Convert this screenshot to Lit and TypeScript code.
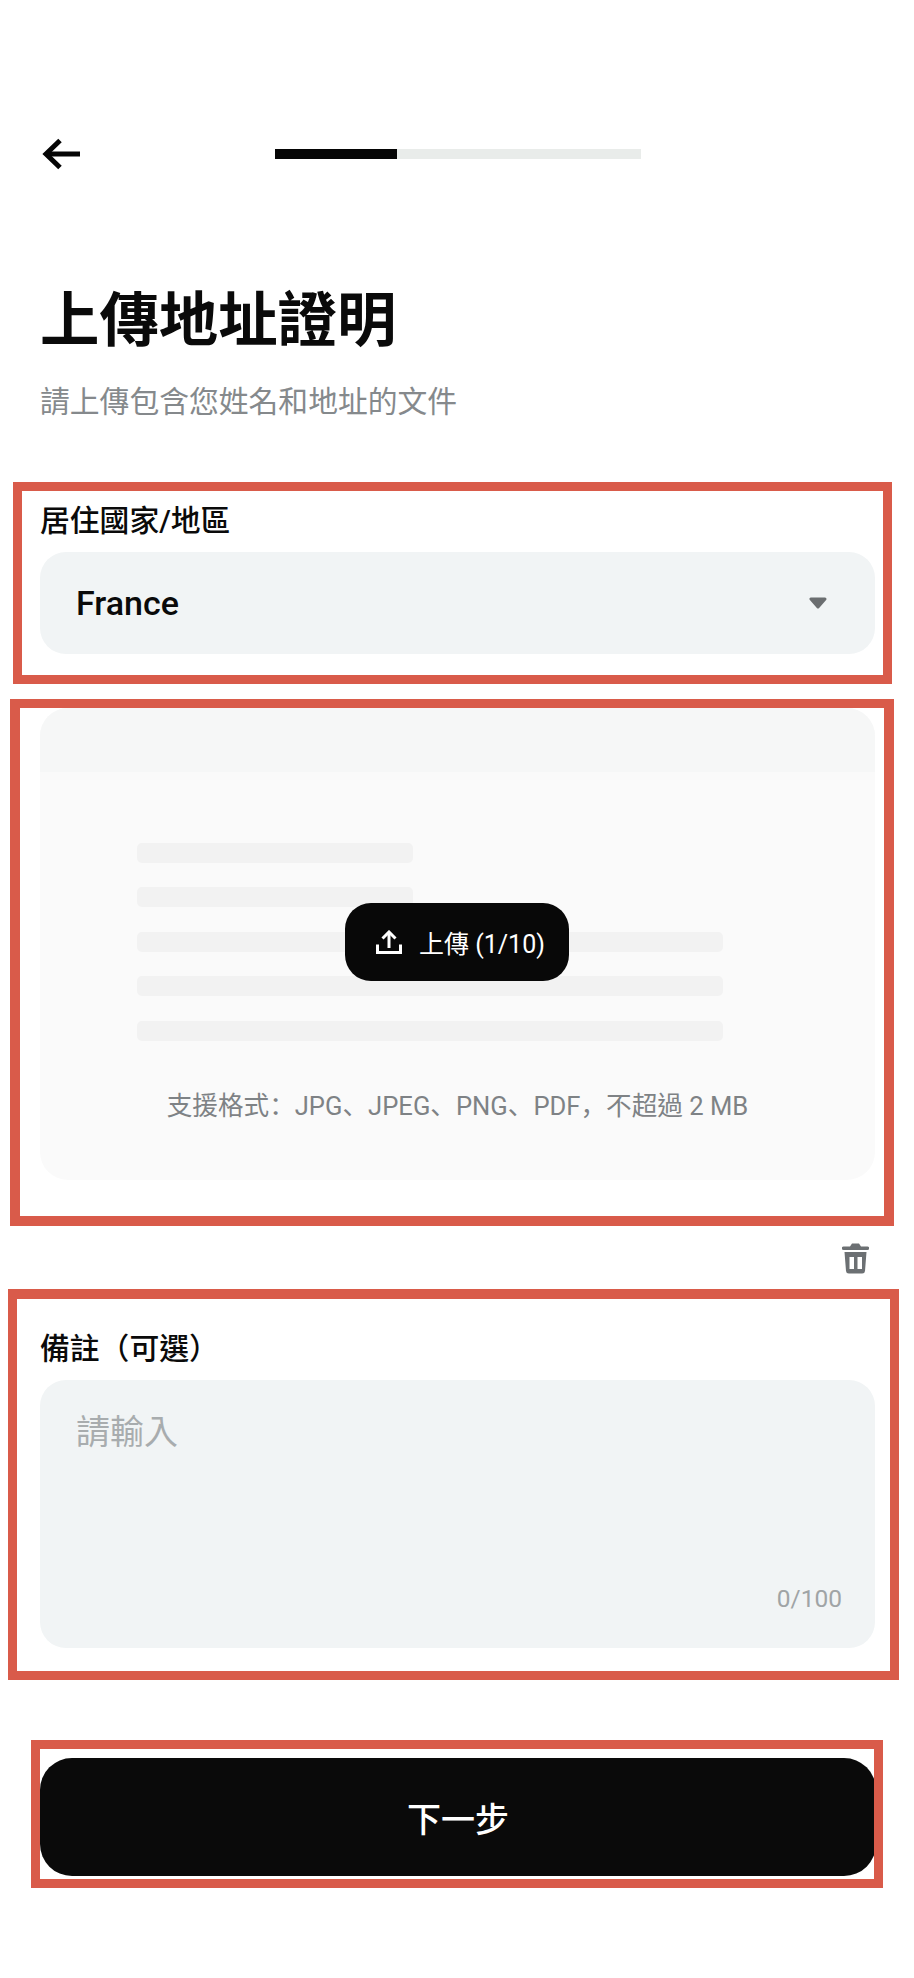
import { LitElement, html, css } from "lit";
import { customElement } from "lit/decorators.js";

@customElement("app-root")
export class AppRoot extends LitElement {
  static styles = css`
    :host {
      display: block;
      width: 914px;
      height: 1978px;
      background: #fff;
      overflow: hidden;
      font-family: Roboto, "Noto Sans CJK TC", sans-serif;
      color: #0a0a0a;
    }
    svg { display: block; }
    .header {
      display: grid;
      grid-template-columns: 233px 366px;
      align-items: center;
      padding: 138px 0 0 42px;
    }
    .track { height: 10px; background: #e9ecea; }
    .fill { height: 100%; width: 122px; background: #050505; }
    h1 {
      margin: 115px 0 0 40px;
      font-size: 59.4px;
      line-height: 72px;
      font-weight: 700;
    }
    .sub {
      margin: 25px 0 0 40px;
      font-size: 29.8px;
      line-height: 40px;
      color: #85898c;
    }
    .punct { font-family: Roboto, "Noto Sans CJK SC", sans-serif; }
    .box { border: 9px solid #d95b4a; box-sizing: border-box; }
    .country {
      margin: 60px 22px 0 13px;
      height: 202px;
      padding: 10px 8px 0 18px;
    }
    .label { font-size: 29.8px; line-height: 40px; font-weight: 500; }
    .select {
      margin-top: 11px;
      height: 102px;
      border-radius: 26px;
      background: #f1f4f5;
      display: flex;
      align-items: center;
      justify-content: space-between;
      padding: 0 48px 0 36px;
      font-size: 34px;
      font-weight: 500;
    }
    .upload {
      margin: 15px 20px 0 10px;
      height: 527px;
      border-width: 9px 10px 10px 10px;
      padding: 0 9px 0 20px;
    }
    .card {
      position: relative;
      height: 472px;
      border-radius: 28px;
      overflow: hidden;
      background: #fafafa;
    }
    .band { height: 64px; background: #f6f7f7; }
    .lines {
      display: flex;
      flex-direction: column;
      gap: 24.4px;
      padding: 71px 0 0 97px;
    }
    .line { height: 20px; width: 586px; border-radius: 5px; background: #f2f2f2; }
    .line.short { width: 276px; }
    .hint {
      margin-top: 47px;
      text-align: center;
      font-size: 25.6px;
      line-height: 36px;
      color: #7e8285;
      white-space: nowrap;
    }
    .upload-btn {
      position: absolute;
      left: 305px;
      top: 195px;
      width: 224px;
      height: 78px;
      box-sizing: border-box;
      border-radius: 26px;
      background: #080808;
      color: #fff;
      display: flex;
      align-items: center;
      gap: 17px;
      padding-left: 31px;
      font-size: 25px;
      white-space: nowrap;
    }
    .trash-row {
      display: flex;
      justify-content: flex-end;
      height: 63px;
      padding: 17px 45px 0 0;
      box-sizing: border-box;
    }
    .note {
      margin: 0 15px 0 8px;
      height: 391px;
      border-top-width: 10px;
      padding: 30px 15px 0 23px;
    }
    .textarea {
      margin-top: 11px;
      height: 268px;
      border-radius: 26px;
      background: #f1f4f5;
      box-sizing: border-box;
      padding: 30px 33px 34px 36px;
      display: flex;
      flex-direction: column;
      justify-content: space-between;
    }
    .placeholder { font-size: 34px; line-height: 44px; color: #a8acae; }
    .count {
      align-self: flex-end;
      font-size: 24.5px;
      line-height: 30px;
      color: #a0a4a6;
    }
    .next-wrap {
      margin: 60px 31px 0 31px;
      height: 148px;
      padding-top: 9px;
      overflow: hidden;
    }
    .next {
      height: 118px;
      margin-right: -2px;
      border-radius: 32px;
      background: #0a0a0a;
      color: #fff;
      display: flex;
      align-items: center;
      justify-content: center;
      font-size: 34px;
      font-weight: 500;
    }
  `;

  render() {
    return html`
      <div class="header">
        <svg width="38" height="32" viewBox="0 0 38 32" fill="none" stroke="#050505" stroke-width="5">
          <path d="M38 16H4" />
          <path d="M18 2.5 4 16l14 13.5" />
        </svg>
        <div class="track"><div class="fill"></div></div>
      </div>

      <h1>上傳地址證明</h1>
      <div class="sub">請上傳包含您姓名和地址的文件</div>

      <section class="box country">
        <div class="label">居住國家/地區</div>
        <div class="select">
          <span>France</span>
          <svg width="18" height="12" viewBox="0 0 18 12" fill="#6b6e70" stroke="#6b6e70" stroke-width="3" stroke-linejoin="round">
            <path d="M2 2h14l-7 8z" />
          </svg>
        </div>
      </section>

      <section class="box upload">
        <div class="card">
          <div class="band"></div>
          <div class="lines">
            <div class="line short"></div>
            <div class="line short"></div>
            <div class="line"></div>
            <div class="line"></div>
            <div class="line"></div>
          </div>
          <div class="hint">支援格式<span class="punct">：</span>JPG<span class="punct">、</span>JPEG<span class="punct">、</span>PNG<span class="punct">、</span>PDF<span class="punct">，</span>不超過 2 MB</div>
          <div class="upload-btn">
            <svg width="26" height="24" viewBox="0 0 26 24" fill="none" stroke="#fff" stroke-width="3">
              <path d="M1.5 14.5v8h23v-8" />
              <path d="M13 18V2.5" />
              <path d="M6.5 8.5 13 2l6.5 6.5" />
            </svg>
            <span>上傳 (1/10)</span>
          </div>
        </div>
      </section>

      <div class="trash-row">
        <svg width="27" height="31" viewBox="0 0 27 31" fill="#6c7073">
          <path d="M8 3.5 10 .5h7l2 3h6.5a1.5 1.5 0 0 1 0 3.5H1.5a1.5 1.5 0 0 1 0-3.5z" />
          <path fill-rule="evenodd" d="M2.5 9h22L23 28a2.8 2.8 0 0 1-2.8 2.5H6.8A2.8 2.8 0 0 1 4 28zM7.5 14v12H12V14zM15.5 14v12H20V14z" />
        </svg>
      </div>

      <section class="box note">
        <div class="label">備註<span class="punct">（</span>可選<span class="punct">）</span></div>
        <div class="textarea">
          <div class="placeholder">請輸入</div>
          <div class="count">0/100</div>
        </div>
      </section>

      <section class="box next-wrap">
        <div class="next">下一步</div>
      </section>
    `;
  }
}
